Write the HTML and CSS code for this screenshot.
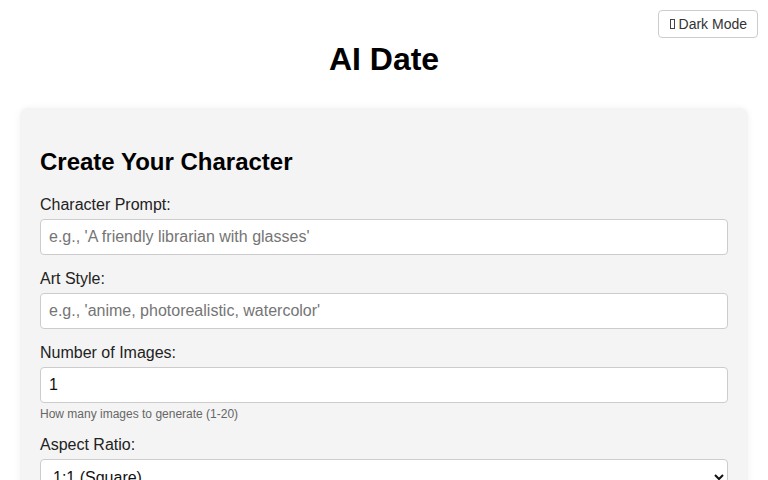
FILE: index.html
```html
<!DOCTYPE html>
<html lang="en">
<head>
<meta charset="utf-8">
<title>AI Date</title>
<link rel="stylesheet" href="styles.css">
</head>
<body>
<button class="theme-toggle"><span class="icon"></span>Dark Mode</button>
<h1 class="title">AI Date</h1>
<div class="panel">
  <h2 class="panel-title">Create Your Character</h2>
  <div class="group">
    <label class="label" for="prompt">Character Prompt:</label>
    <input class="field" id="prompt" type="text" placeholder="e.g., 'A friendly librarian with glasses'">
  </div>
  <div class="group">
    <label class="label" for="style">Art Style:</label>
    <input class="field" id="style" type="text" placeholder="e.g., 'anime, photorealistic, watercolor'">
  </div>
  <div class="group">
    <label class="label" for="count">Number of Images:</label>
    <input class="field" id="count" type="number" value="1" min="1" max="20">
    <small class="hint">How many images to generate (1-20)</small>
  </div>
  <div class="group">
    <label class="label" for="ratio">Aspect Ratio:</label>
    <select class="field" id="ratio">
      <option>1:1 (Square)</option>
      <option>16:9 (Landscape)</option>
      <option>9:16 (Portrait)</option>
    </select>
  </div>
</div>
</body>
</html>
```
FILE: styles.css
```css
* { box-sizing: border-box; }
body {
  margin: 0;
  padding: 20px;
  font-family: "Liberation Sans", Arial, sans-serif;
  color: #111;
  background: #fff;
}
.theme-toggle {
  position: fixed;
  top: 10px;
  right: 10px;
  height: 28px;
  padding: 0 10px 0 11px;
  display: flex;
  align-items: center;
  font-family: "Liberation Sans", Arial, sans-serif;
  font-size: 14px;
  color: #333;
  background: #fff;
  border: 1px solid #ccc;
  border-radius: 4px;
}
.icon {
  display: inline-block;
  width: 5px;
  height: 10px;
  margin-right: 4px;
  border: 1px solid #444;
}
.title {
  margin: 21px 0 30px;
  text-align: center;
  font-size: 32px;
  line-height: 37px;
  color: #000;
}
.panel {
  background: #f4f4f4;
  border-radius: 8px;
  padding: 20px;
  box-shadow: 0 0 6px rgba(0,0,0,0.06);
}
.panel-title {
  margin: 20px 0;
  font-size: 24px;
  color: #000;
}
.group {
  margin-bottom: 15px;
}
.label {
  display: block;
  margin-bottom: 5px;
  font-size: 16px;
  color: #222;
}
.field {
  display: block;
  width: 100%;
  height: 36px;
  padding: 8px;
  font-family: "Liberation Sans", Arial, sans-serif;
  font-size: 16px;
  color: #111;
  background: #fff;
  border: 1px solid #ccc;
  border-radius: 4px;
}
.hint {
  display: block;
  margin-top: 4px;
  font-size: 12px;
  color: #666;
}
```
